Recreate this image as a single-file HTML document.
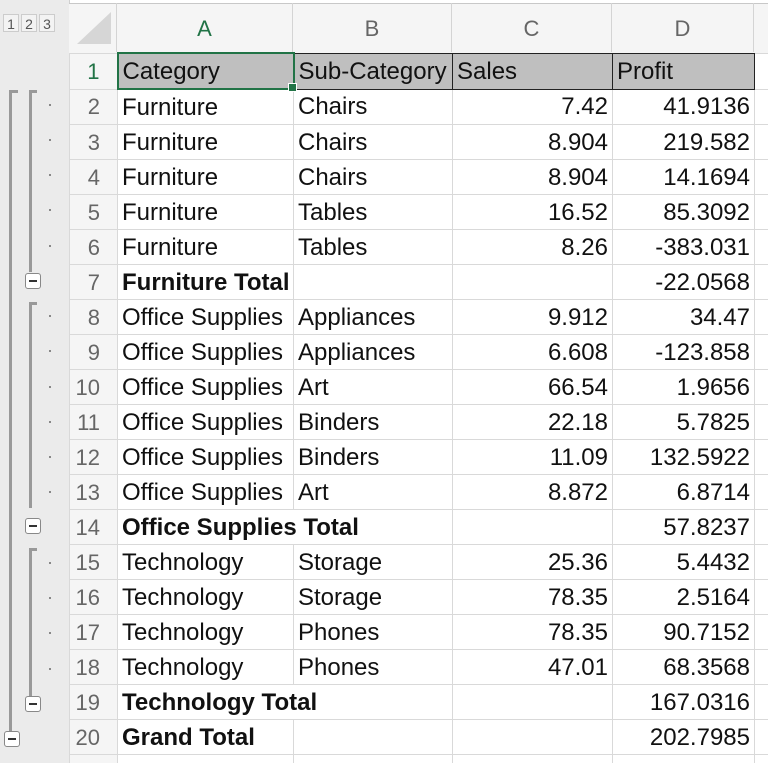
<!DOCTYPE html>
<html><head><style>
html,body{margin:0;width:768px;height:763px;overflow:hidden}
body{background:#fff;font-family:"Liberation Sans",sans-serif;position:relative}
.side{position:absolute;left:0;top:0;width:69px;height:763px;background:#ebebeb;border-right:1px solid #d0d0d0}
.colhdr{position:absolute;left:69px;top:3px;width:699px;height:49px;background:#f5f5f5;border-top:1px solid #c8c8c8;border-bottom:1px solid #c8c8c8}
.ch{position:absolute;top:3px;height:49px;line-height:52px;text-align:center;font-size:22px;color:#666;border-right:1px solid #d4d4d4;box-sizing:border-box}
table{position:absolute;left:69px;top:52px;border-collapse:collapse;table-layout:fixed;width:725px}
td{height:34px;padding:0 4px;border:1px solid #d9d9d9;font-size:24px;white-space:nowrap;overflow:visible;color:#111;line-height:33px}
td.rh{background:#f5f5f5;color:#666;text-align:right;padding-right:17px;border-color:#d9d9d9;font-size:22px}
td.n{text-align:right}
tr.b td{font-weight:bold}
tr.b td.rh,tr.b td.n{font-weight:normal}
tr.h td:not(.rh){background:#bfbfbf;border:1px solid #222}
.btn{position:absolute;width:16px;height:16px;border:1px solid #888;border-radius:3px;background:#fff;box-sizing:border-box}
.btn:after{content:"";position:absolute;left:3px;top:6px;width:8px;height:2px;background:#333}
.vl{position:absolute;width:3px;background:#999}
.hl{position:absolute;height:3px;background:#999}
.dot{position:absolute;left:49px;width:2px;height:2px;background:#888}
.lv{position:absolute;top:14px;width:16px;height:18px;background:#f3f3f3;border:1px solid #ccc;font-size:14px;color:#555;text-align:center;line-height:18px;box-sizing:border-box}
</style></head><body>
<div class="side"></div>
<div class="lv" style="left:3px">1</div><div class="lv" style="left:21px">2</div><div class="lv" style="left:39px">3</div>
<div class="colhdr"></div>
<div style="position:absolute;left:69px;top:3px;width:48px;height:49px;border-right:1px solid #d4d4d4;box-sizing:border-box"></div>
<svg style="position:absolute;left:75px;top:10px" width="38" height="36"><polygon points="36,2 36,34 2,34" fill="#d6d6d6"/></svg>
<div class="ch" style="left:117px;width:176px;color:#217346">A</div>
<div class="ch" style="left:293px;width:159px">B</div>
<div class="ch" style="left:452px;width:160px">C</div>
<div class="ch" style="left:612px;width:142px">D</div>
<div class="vl" style="left:9px;top:90px;height:642px"></div><div class="hl" style="left:9px;top:90px;width:9px"></div>
<div class="vl" style="left:29px;top:90px;height:182px"></div><div class="hl" style="left:29px;top:90px;width:8px"></div>
<div class="btn" style="left:25px;top:273px"></div>
<div class="vl" style="left:29px;top:302px;height:206px"></div><div class="hl" style="left:29px;top:302px;width:8px"></div>
<div class="btn" style="left:25px;top:518px"></div>
<div class="vl" style="left:29px;top:548px;height:148px"></div><div class="hl" style="left:29px;top:548px;width:8px"></div>
<div class="btn" style="left:25px;top:696px"></div>
<div class="btn" style="left:4px;top:731px"></div>
<div class="dot" style="top:104px"></div><div class="dot" style="top:139px"></div><div class="dot" style="top:174px"></div><div class="dot" style="top:209px"></div><div class="dot" style="top:245px"></div>
<div class="dot" style="top:315px"></div><div class="dot" style="top:350px"></div><div class="dot" style="top:386px"></div><div class="dot" style="top:421px"></div><div class="dot" style="top:456px"></div><div class="dot" style="top:491px"></div>
<div class="dot" style="top:562px"></div><div class="dot" style="top:597px"></div><div class="dot" style="top:632px"></div><div class="dot" style="top:668px"></div>
<table>
<colgroup><col style="width:48px"><col style="width:176px"><col style="width:159px"><col style="width:160px"><col style="width:142px"><col style="width:40px"></colgroup>
<tr class="h"><td class="rh" style="color:#217346">1</td><td style="border:2px solid #217346">Category</td><td>Sub-Category</td><td>Sales</td><td>Profit</td><td style="background:#fff;border-color:#d9d9d9 #fff #d9d9d9 #222"></td></tr>
<tr><td class="rh">2</td><td>Furniture</td><td>Chairs</td><td class="n">7.42</td><td class="n">41.9136</td><td></td></tr>
<tr><td class="rh">3</td><td>Furniture</td><td>Chairs</td><td class="n">8.904</td><td class="n">219.582</td><td></td></tr>
<tr><td class="rh">4</td><td>Furniture</td><td>Chairs</td><td class="n">8.904</td><td class="n">14.1694</td><td></td></tr>
<tr><td class="rh">5</td><td>Furniture</td><td>Tables</td><td class="n">16.52</td><td class="n">85.3092</td><td></td></tr>
<tr><td class="rh">6</td><td>Furniture</td><td>Tables</td><td class="n">8.26</td><td class="n">-383.031</td><td></td></tr>
<tr class="b"><td class="rh">7</td><td>Furniture Total</td><td></td><td></td><td class="n">-22.0568</td><td></td></tr>
<tr><td class="rh">8</td><td>Office Supplies</td><td>Appliances</td><td class="n">9.912</td><td class="n">34.47</td><td></td></tr>
<tr><td class="rh">9</td><td>Office Supplies</td><td>Appliances</td><td class="n">6.608</td><td class="n">-123.858</td><td></td></tr>
<tr><td class="rh">10</td><td>Office Supplies</td><td>Art</td><td class="n">66.54</td><td class="n">1.9656</td><td></td></tr>
<tr><td class="rh">11</td><td>Office Supplies</td><td>Binders</td><td class="n">22.18</td><td class="n">5.7825</td><td></td></tr>
<tr><td class="rh">12</td><td>Office Supplies</td><td>Binders</td><td class="n">11.09</td><td class="n">132.5922</td><td></td></tr>
<tr><td class="rh">13</td><td>Office Supplies</td><td>Art</td><td class="n">8.872</td><td class="n">6.8714</td><td></td></tr>
<tr class="b"><td class="rh">14</td><td style="border-right-color:transparent">Office Supplies Total</td><td></td><td></td><td class="n">57.8237</td><td></td></tr>
<tr><td class="rh">15</td><td>Technology</td><td>Storage</td><td class="n">25.36</td><td class="n">5.4432</td><td></td></tr>
<tr><td class="rh">16</td><td>Technology</td><td>Storage</td><td class="n">78.35</td><td class="n">2.5164</td><td></td></tr>
<tr><td class="rh">17</td><td>Technology</td><td>Phones</td><td class="n">78.35</td><td class="n">90.7152</td><td></td></tr>
<tr><td class="rh">18</td><td>Technology</td><td>Phones</td><td class="n">47.01</td><td class="n">68.3568</td><td></td></tr>
<tr class="b"><td class="rh">19</td><td style="border-right-color:transparent">Technology Total</td><td></td><td></td><td class="n">167.0316</td><td></td></tr>
<tr class="b"><td class="rh">20</td><td>Grand Total</td><td></td><td></td><td class="n">202.7985</td><td></td></tr>
<tr><td class="rh"></td><td></td><td></td><td></td><td></td><td></td></tr>
</table>
<div style="position:absolute;left:288px;top:83px;width:7px;height:7px;background:#217346;border:1px solid #fff"></div>
</body></html>
